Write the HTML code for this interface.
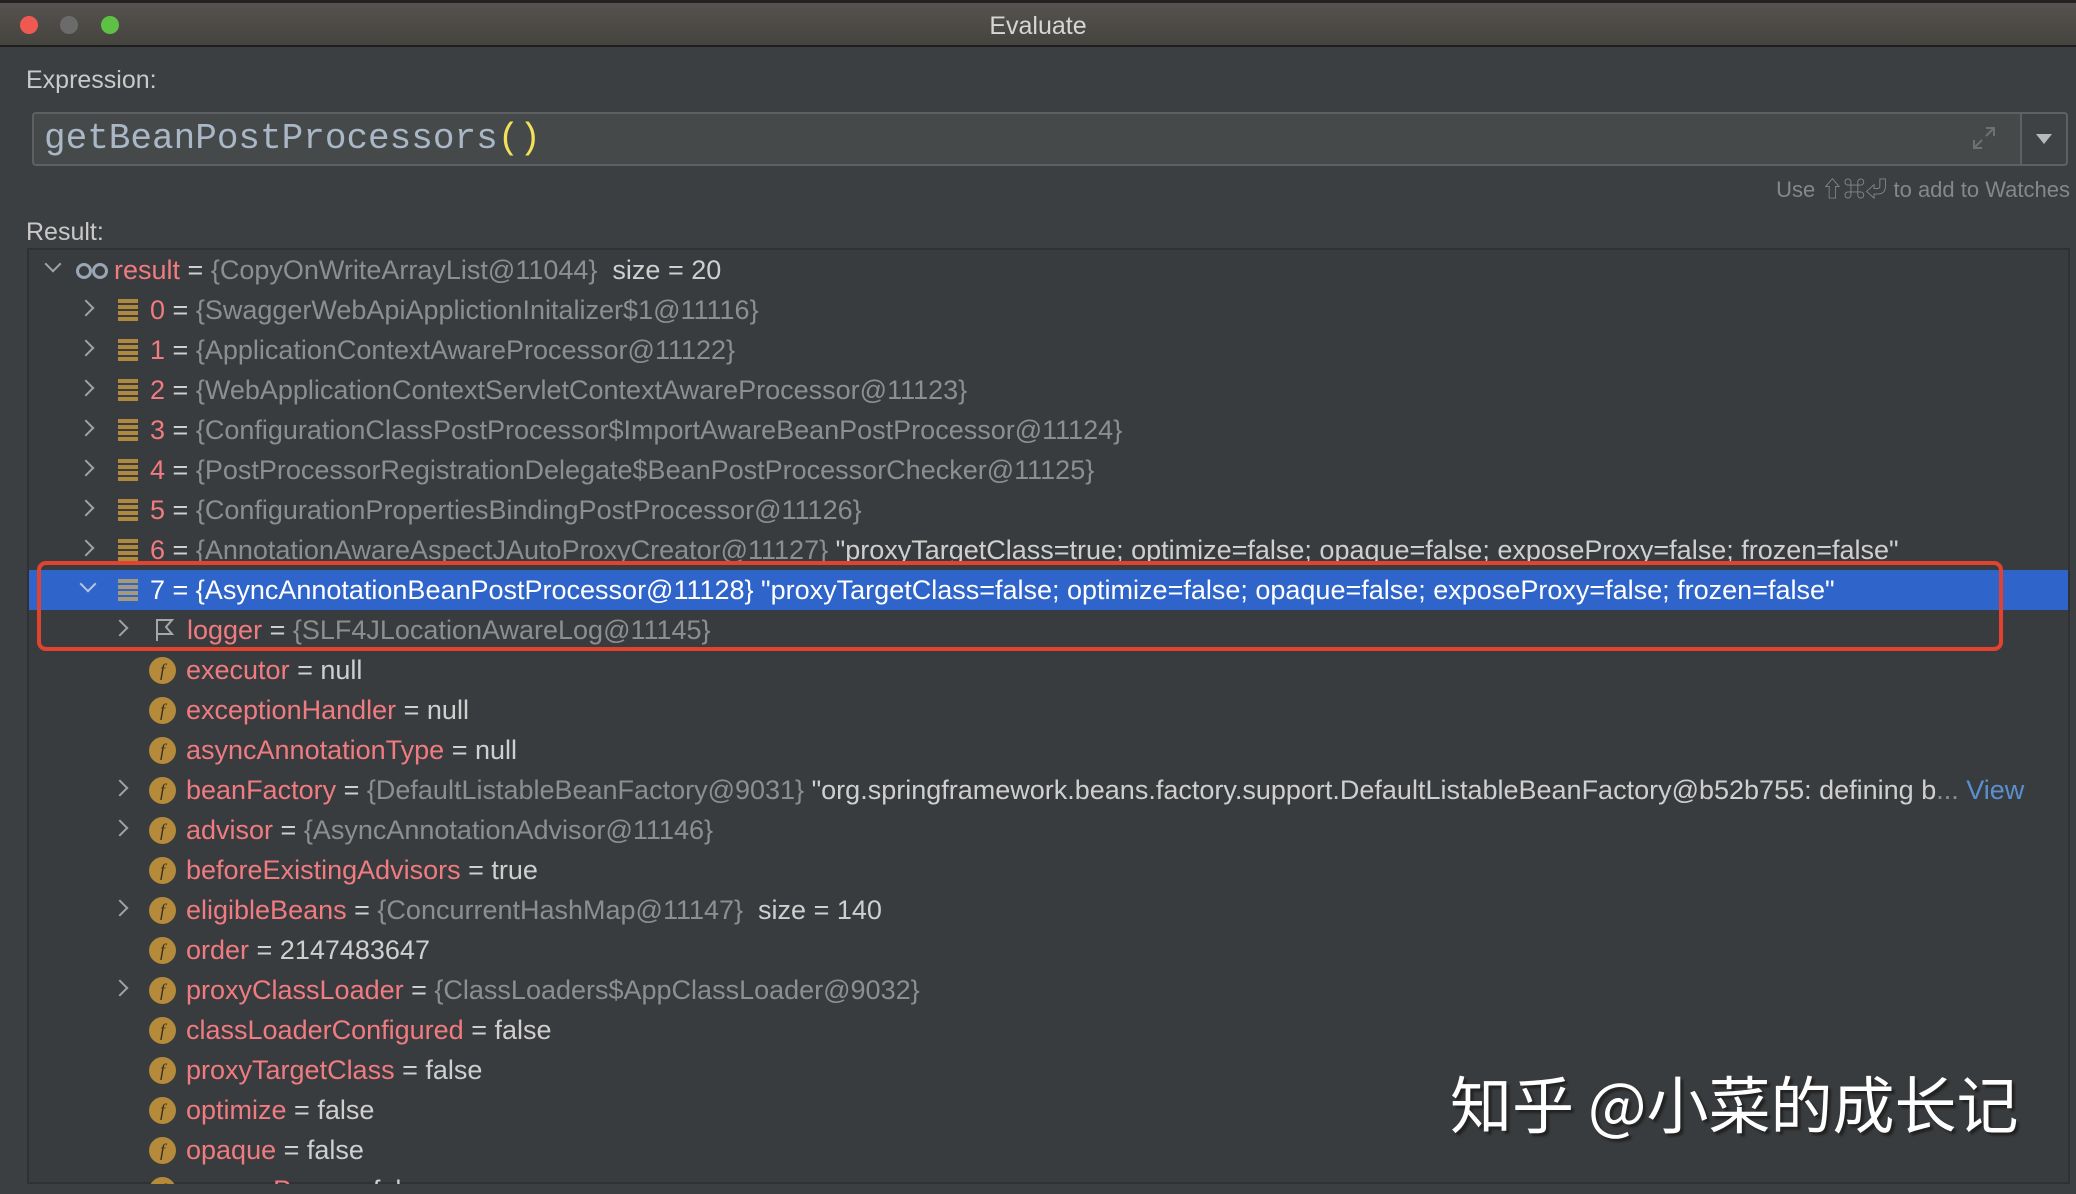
<!DOCTYPE html>
<html><head><meta charset="utf-8">
<style>
*{margin:0;padding:0;box-sizing:border-box}
html,body{width:2076px;height:1194px;overflow:hidden;background:#3c3f41;font-family:"Liberation Sans","Noto Sans CJK SC",sans-serif}
.abs{position:absolute}
#title{left:0;top:0;width:2076px;height:47px;background:linear-gradient(#55524f,#46443f);border-bottom:2px solid #1e1e1e;border-top:3px solid #222}
.tl{width:18px;height:18px;border-radius:50%;top:16px}
#ttext{left:0;width:2076px;top:12px;text-align:center;color:#d6d6d6;font-size:25px}
.lbl{color:#c9c9c9;font-size:25px}
#expr{left:32px;top:112px;width:2036px;height:54px;background:#45494a;border:2px solid #5e6164;border-radius:4px}
#exprt{left:44px;top:116px;font-family:"Liberation Mono",monospace;font-size:36px;color:#a9b7c6;line-height:46px}
#dd{left:2020px;top:112px;width:48px;height:54px;background:#3f4244;border-radius:0 4px 4px 0;border:2px solid #5e6164}
#tree{left:27px;top:248px;width:2043px;height:936px;background:#393c3e;border:2px solid #2f3133;overflow:hidden}
.row{position:absolute;left:0;height:40px;line-height:40px;font-size:27px;white-space:nowrap;color:#cfcfcf;width:2100px}
.n{color:#f07b80}
.g{color:#8c8e90}
.chev{position:absolute;top:12px;width:12px;height:12px;border-right:2.5px solid #a0a2a4;border-bottom:2.5px solid #a0a2a4}
.cr{transform:rotate(-45deg)}
.cd{transform:rotate(45deg);top:8px}
.arr{position:absolute;top:9px;width:20px;height:22px;background:repeating-linear-gradient(#b0893e 0 4px,#393c3e 4px 6px)}
.fi{position:absolute;top:7px;width:27px;height:27px;border-radius:50%;background:#b58a3a;color:#3a3020;font-size:18px;line-height:27px;text-align:center;font-family:"Liberation Serif",serif;font-style:italic}
.t{position:absolute;top:0}
</style></head><body>
<div id="title" class="abs"></div>
<div class="abs tl" style="left:20px;background:#ee5a52"></div>
<div class="abs tl" style="left:60px;background:#6b6b6b"></div>
<div class="abs tl" style="left:101px;background:#5fc046"></div>
<div id="ttext" class="abs">Evaluate</div>
<div class="abs lbl" style="left:26px;top:66px">Expression:</div>
<div id="expr" class="abs"></div>
<div id="exprt" class="abs">getBeanPostProcessors<span style="color:#f2e15a">()</span></div>
<div id="dd" class="abs"><div style="position:absolute;left:14px;top:20px;border-left:8px solid transparent;border-right:8px solid transparent;border-top:10px solid #b9b9b9"></div></div>
<svg class="abs" style="left:1972px;top:126px" width="24" height="24"><path d="M14 2h8v8M22 2l-8 8M2 14v8h8M2 22l8-8" stroke="#6e7173" stroke-width="2" fill="none"/></svg>
<div class="abs" style="right:6px;top:172px;color:#85878a;font-size:22px">Use ⇧⌘⏎ to add to Watches</div>
<div class="abs lbl" style="left:26px;top:218px">Result:</div>
<div id="tree" class="abs">
<div class="abs" style="left:0;top:320px;width:2043px;height:40px;background:#2f65ca"></div>
</div>
<div class="abs" style="left:27px;top:248px;width:2043px;height:936px;overflow:hidden">
<div class="row" style="top:2px"><div class="chev cd" style="left:20px"></div><svg class="t" style="left:48px;top:10px" width="34" height="20"><circle cx="9" cy="11" r="6.5" stroke="#9aa6b4" stroke-width="3" fill="none"/><circle cx="25" cy="11" r="6.5" stroke="#9aa6b4" stroke-width="3" fill="none"/></svg><span class="t" style="left:87px"><span class="n">result</span> = <span class="g">{CopyOnWriteArrayList@11044}</span>&nbsp; size = 20</span></div>

<div class="row" style="top:42px"><div class="chev cr" style="left:53px"></div><div class="arr" style="left:91px"></div><span class="t" style="left:123px"><span class="n">0</span> = <span class="g">{SwaggerWebApiApplictionInitalizer$1@11116}</span></span></div>
<div class="row" style="top:82px"><div class="chev cr" style="left:53px"></div><div class="arr" style="left:91px"></div><span class="t" style="left:123px"><span class="n">1</span> = <span class="g">{ApplicationContextAwareProcessor@11122}</span></span></div>
<div class="row" style="top:122px"><div class="chev cr" style="left:53px"></div><div class="arr" style="left:91px"></div><span class="t" style="left:123px"><span class="n">2</span> = <span class="g">{WebApplicationContextServletContextAwareProcessor@11123}</span></span></div>
<div class="row" style="top:162px"><div class="chev cr" style="left:53px"></div><div class="arr" style="left:91px"></div><span class="t" style="left:123px"><span class="n">3</span> = <span class="g">{ConfigurationClassPostProcessor$ImportAwareBeanPostProcessor@11124}</span></span></div>
<div class="row" style="top:202px"><div class="chev cr" style="left:53px"></div><div class="arr" style="left:91px"></div><span class="t" style="left:123px"><span class="n">4</span> = <span class="g">{PostProcessorRegistrationDelegate$BeanPostProcessorChecker@11125}</span></span></div>
<div class="row" style="top:242px"><div class="chev cr" style="left:53px"></div><div class="arr" style="left:91px"></div><span class="t" style="left:123px"><span class="n">5</span> = <span class="g">{ConfigurationPropertiesBindingPostProcessor@11126}</span></span></div>
<div class="row" style="top:282px"><div class="chev cr" style="left:53px"></div><div class="arr" style="left:91px"></div><span class="t" style="left:123px"><span class="n">6</span> = <span class="g">{AnnotationAwareAspectJAutoProxyCreator@11127}</span> "proxyTargetClass=true; optimize=false; opaque=false; exposeProxy=false; frozen=false"</span></div>
<div class="row" style="top:322px;color:#fff"><div class="chev cd" style="left:55px;border-color:#b8c4dc"></div><div class="arr" style="left:91px;background:repeating-linear-gradient(#a89a78 0 4px,#2f65ca 4px 6px)"></div><span class="t" style="left:123px">7 = {AsyncAnnotationBeanPostProcessor@11128} "proxyTargetClass=false; optimize=false; opaque=false; exposeProxy=false; frozen=false"</span></div>
<div class="row" style="top:362px"><div class="chev cr" style="left:87px"></div><svg class="t" style="left:127px;top:8px" width="20" height="24"><path d="M3 23V2h15l-6 7 6 7H3" stroke="#a5a7a9" stroke-width="2" fill="none"/></svg><span class="t" style="left:160px"><span class="n">logger</span> = <span class="g">{SLF4JLocationAwareLog@11145}</span></span></div>
<div class="row" style="top:402px"><div class="fi" style="left:122px">f</div><span class="t" style="left:159px"><span class="n">executor</span> = null</span></div>
<div class="row" style="top:442px"><div class="fi" style="left:122px">f</div><span class="t" style="left:159px"><span class="n">exceptionHandler</span> = null</span></div>
<div class="row" style="top:482px"><div class="fi" style="left:122px">f</div><span class="t" style="left:159px"><span class="n">asyncAnnotationType</span> = null</span></div>
<div class="row" style="top:522px"><div class="chev cr" style="left:87px"></div><div class="fi" style="left:122px">f</div><span class="t" style="left:159px"><span class="n">beanFactory</span> = <span class="g">{DefaultListableBeanFactory@9031}</span> "org.springframework.beans.factory.support.DefaultListableBeanFactory@b52b755: defining b<span class="g">...</span> <span style="color:#5a8fd0">View</span></span></div>
<div class="row" style="top:562px"><div class="chev cr" style="left:87px"></div><div class="fi" style="left:122px">f</div><span class="t" style="left:159px"><span class="n">advisor</span> = <span class="g">{AsyncAnnotationAdvisor@11146}</span></span></div>
<div class="row" style="top:602px"><div class="fi" style="left:122px">f</div><span class="t" style="left:159px"><span class="n">beforeExistingAdvisors</span> = true</span></div>
<div class="row" style="top:642px"><div class="chev cr" style="left:87px"></div><div class="fi" style="left:122px">f</div><span class="t" style="left:159px"><span class="n">eligibleBeans</span> = <span class="g">{ConcurrentHashMap@11147}</span>&nbsp; size = 140</span></div>
<div class="row" style="top:682px"><div class="fi" style="left:122px">f</div><span class="t" style="left:159px"><span class="n">order</span> = 2147483647</span></div>
<div class="row" style="top:722px"><div class="chev cr" style="left:87px"></div><div class="fi" style="left:122px">f</div><span class="t" style="left:159px"><span class="n">proxyClassLoader</span> = <span class="g">{ClassLoaders$AppClassLoader@9032}</span></span></div>
<div class="row" style="top:762px"><div class="fi" style="left:122px">f</div><span class="t" style="left:159px"><span class="n">classLoaderConfigured</span> = false</span></div>
<div class="row" style="top:802px"><div class="fi" style="left:122px">f</div><span class="t" style="left:159px"><span class="n">proxyTargetClass</span> = false</span></div>
<div class="row" style="top:842px"><div class="fi" style="left:122px">f</div><span class="t" style="left:159px"><span class="n">optimize</span> = false</span></div>
<div class="row" style="top:882px"><div class="fi" style="left:122px">f</div><span class="t" style="left:159px"><span class="n">opaque</span> = false</span></div>
<div class="row" style="top:922px"><div class="fi" style="left:122px">f</div><span class="t" style="left:159px"><span class="n">exposeProxy</span> = false</span></div>
</div>
<div class="abs" style="left:37px;top:561px;width:1966px;height:90px;border:4px solid #e2432f;border-radius:9px"></div>
<div class="abs" style="left:1450px;top:1056px;font-size:62px;color:#fff;text-shadow:3px 3px 2px #222;white-space:nowrap;font-family:'Noto Sans CJK SC','Liberation Sans',sans-serif">知乎 @小菜的成长记</div>
</body></html>
